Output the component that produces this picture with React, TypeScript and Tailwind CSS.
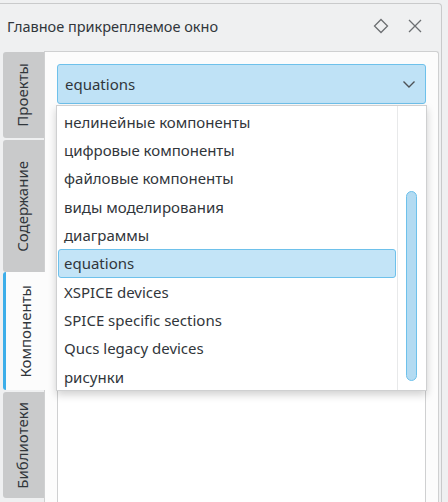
import React from "react";

const items = [
  "нелинейные компоненты",
  "цифровые компоненты",
  "файловые компоненты",
  "виды моделирования",
  "диаграммы",
  "equations",
  "XSPICE devices",
  "SPICE specific sections",
  "Qucs legacy devices",
  "рисунки",
];

const tabs = [
  { label: "Проекты", h: "h-[86px]", active: false },
  { label: "Содержание", h: "h-[132px]", active: false },
  { label: "Компоненты", h: "h-[118px]", active: true },
  { label: "Библиотеки", h: "h-[106px]", active: false },
];

const App: React.FC = () => {
  return (
    <div className="w-[448px] h-[502px] overflow-hidden bg-[#eff0f1] pt-[3px] pr-[6px] font-['Noto_Sans',sans-serif] text-[#31363b]">
      <div className="h-full border-t border-r border-[#c9cacb] rounded-tr-[4px] flex flex-col">
        {/* Title bar */}
        <div className="h-[47px] shrink-0 flex items-center pl-[7px] pr-[18px]">
          <span className="text-[14.5px] flex-1 pb-[2px]">Главное прикрепляемое окно</span>
          <svg width="18" height="18" viewBox="0 0 18 18" className="mr-[17px] mb-[3px]">
            <path d="M9 2.5 L15.5 9 L9 15.5 L2.5 9 Z" fill="none" stroke="#6c6f72" strokeWidth="1.3" />
          </svg>
          <svg width="16" height="16" viewBox="0 0 16 16" className="mb-[3px]">
            <path d="M2 2 L14 14 M14 2 L2 14" stroke="#6c6f72" strokeWidth="1.3" />
          </svg>
        </div>

        {/* Body */}
        <div className="flex flex-1 min-h-0">
          {/* Tab bar */}
          <div className="w-[44px] shrink-0 pl-[3px] pt-[1px] flex flex-col gap-[2px] relative z-10">
            {tabs.map((t) =>
              t.active ? (
                <div
                  key={t.label}
                  className={`${t.h} -mt-[2px] -mr-[2px] bg-[#fcfcfc] border-l-[3px] border-[#3daee9] rounded-l-[3px] flex items-center justify-center`}
                >
                  <span className="[writing-mode:vertical-rl] rotate-180 text-[15px] pl-[2px]">{t.label}</span>
                </div>
              ) : (
                <div
                  key={t.label}
                  className={`${t.h} bg-[#c9cacb] rounded-l-[3px] flex items-center justify-center`}
                >
                  <span className="[writing-mode:vertical-rl] rotate-180 text-[15px] pl-[3px]">{t.label}</span>
                </div>
              )
            )}
          </div>

          {/* Panel */}
          <div className="flex-1 bg-[#fcfcfc] border-t border-l border-r border-[#cfd0d1] rounded-tr-[3px] mr-[2px] pt-[12px] pl-[12px] pr-[12px] flex flex-col">
            <div className="relative flex flex-col flex-1">
              {/* Combobox */}
              <div className="h-[40px] shrink-0 rounded-[3px] bg-[#bfe2f6] border border-[#6ec1eb] flex items-center pl-[7px] pr-[9px]">
                <span className="text-[15px] flex-1">equations</span>
                <svg width="14" height="10" viewBox="0 0 14 10">
                  <path d="M1.5 2.5 L7 8 L12.5 2.5" fill="none" stroke="#4d5256" strokeWidth="1.4" />
                </svg>
              </div>
              {/* Underlying list */}
              <div className="flex-1 mt-[2px] bg-white border-l border-r border-[#cfd0d1]" />

              {/* Popup */}
              <div className="absolute left-[-1px] right-[-1px] top-[41px] h-[286px] bg-white border border-[#cfd0d1] shadow-[0_4px_8px_rgba(0,0,0,0.18)] flex">
                <div className="flex-1 pt-[2px] pl-[1px] pr-[1px]">
                  {items.map((it) =>
                    it === "equations" ? (
                      <div
                        key={it}
                        className="h-[28.3px] flex items-center pl-[5px] bg-[#c3e4f7] border border-[#6ec1eb] rounded-[3px] text-[15px]"
                      >
                        {it}
                      </div>
                    ) : (
                      <div key={it} className="h-[28.3px] flex items-center pl-[6px] text-[15px]">
                        {it}
                      </div>
                    )
                  )}
                </div>
                <div className="w-[29px] border-l border-[#e8e9ea] relative">
                  <div className="absolute left-[8px] top-[85px] w-[11px] h-[190px] rounded-full bg-[#b3dbf2] border border-[#6ec1eb]" />
                </div>
              </div>
            </div>
          </div>
        </div>
      </div>
    </div>
  );
};

export default App;
